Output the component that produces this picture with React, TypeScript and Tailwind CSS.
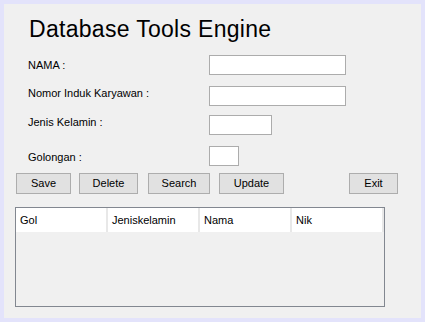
import React from "react";

function Btn({ label, w, ml }: { label: string; w: string; ml: string }) {
  return (
    <div
      className={`h-[21px] ${w} ${ml} flex items-center justify-center border border-[#adadad] bg-[#e1e1e1] text-[11px] leading-none text-black`}
    >
      {label}
    </div>
  );
}

export default function App() {
  return (
    <div className="w-[425px] h-[322px] bg-[#e3e3fb] p-1 font-['Liberation_Sans',Arial,sans-serif]">
      <div className="w-full h-full bg-[#f0f0f0] flex flex-col">
        <div className="h-[51px] pl-[25px] pt-[14px] text-[23px] leading-[23px] tracking-[0.3px] text-black">
          Database Tools Engine
        </div>

        <div className="flex h-[20px] pl-[24px]">
          <div className="w-[181px] text-[11px] leading-[13px] mt-[4px]">NAMA :</div>
          <div className="w-[137px] h-[20px] border border-[#acacac] bg-white" />
        </div>
        <div className="flex h-[20px] pl-[24px] mt-[11px]">
          <div className="w-[181px] text-[11px] leading-[13px] mt-[1px]">Nomor Induk Karyawan :</div>
          <div className="w-[137px] h-[20px] border border-[#acacac] bg-white" />
        </div>
        <div className="flex h-[20px] pl-[24px] mt-[9px]">
          <div className="w-[181px] text-[11px] leading-[13px] mt-[1px]">Jenis Kelamin :</div>
          <div className="w-[63px] h-[20px] border border-[#acacac] bg-white" />
        </div>
        <div className="flex h-[20px] pl-[24px] mt-[11px]">
          <div className="w-[181px] text-[11px] leading-[13px] mt-[5px]">Golongan :</div>
          <div className="w-[30px] h-[20px] border border-[#acacac] bg-white" />
        </div>

        <div className="flex mt-[7px] pl-[12px]">
          <Btn label="Save" w="w-[55px]" ml="ml-0" />
          <Btn label="Delete" w="w-[59px]" ml="ml-[8px]" />
          <Btn label="Search" w="w-[62px]" ml="ml-[10px]" />
          <Btn label="Update" w="w-[65px]" ml="ml-[9px]" />
          <Btn label="Exit" w="w-[49px]" ml="ml-[65px]" />
        </div>

        <div className="ml-[11px] mt-[13px] w-[370px] h-[100px] border border-[#828790] bg-[#f0f0f0]">
          <div className="flex h-[24px]">
            {["Gol", "Jeniskelamin", "Nama", "Nik"].map((h) => (
              <div
                key={h}
                className="w-[92px] h-[24px] bg-white border-r-2 border-[#e8e8e8] flex items-center pl-[4px] text-[11px] leading-none text-black"
              >
                {h}
              </div>
            ))}
          </div>
        </div>
      </div>
    </div>
  );
}
